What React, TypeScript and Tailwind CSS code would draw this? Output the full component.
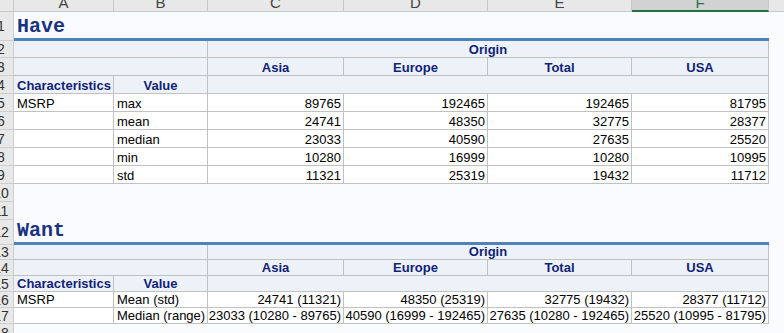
import type { ReactNode } from "react";

const COLS = [
  { l: "A", w: "w-[100px]" },
  { l: "B", w: "w-[94px]" },
  { l: "C", w: "w-[136px]" },
  { l: "D", w: "w-[144px]" },
  { l: "E", w: "w-[144px]" },
  { l: "F", w: "w-[137px]" },
];

const HAVE = [
  ["MSRP", "max", "89765", "192465", "192465", "81795"],
  ["", "mean", "24741", "48350", "32775", "28377"],
  ["", "median", "23033", "40590", "27635", "25520"],
  ["", "min", "10280", "16999", "10280", "10995"],
  ["", "std", "11321", "25319", "19432", "11712"],
];

const WANT = [
  ["MSRP", "Mean (std)", "24741 (11321)", "48350 (25319)", "32775 (19432)", "28377 (11712)"],
  [
    "",
    "Median (range)",
    "23033 (10280 - 89765)",
    "40590 (16999 - 192465)",
    "27635 (10280 - 192465)",
    "25520 (10995 - 81795)",
  ],
];

const cellBase =
  "shrink-0 flex items-end overflow-hidden whitespace-nowrap border-r border-b border-[#c1c1c1]";

function Cell({
  w,
  head,
  align = "l",
  children,
}: {
  w: string;
  head?: boolean;
  align?: "l" | "c" | "r";
  children?: ReactNode;
}) {
  const pos =
    align === "r" ? "justify-end pr-[2px]" : align === "c" ? "justify-center" : "justify-start pl-[3px]";
  const look = head ? "bg-[#edf2f9] text-[#112277] font-bold" : "bg-white text-black";
  return <div className={`${cellBase} ${w} ${pos} ${look}`}>{children}</div>;
}

function Row({ n, h, children }: { n: number; h: string; children?: ReactNode }) {
  return (
    <div className={`flex ${h}`}>
      {/* row header, left half scrolled out of view */}
      <div className="w-[14px] shrink-0 overflow-hidden flex items-center bg-[#e8e8e8] border-r border-b border-[#cdcdcd] text-[14px] text-[#333]">
        <div className="w-[28px] -ml-[13px] shrink-0 text-center leading-none">{n}</div>
      </div>
      {children}
      <div className="flex-1 bg-[#fafbfe]" />
    </div>
  );
}

function Title({ n, h, text }: { n: number; h: string; text: string }) {
  return (
    <Row n={n} h={h}>
      <div className="w-[755px] shrink-0 flex items-end pl-[3px] border-b-[3px] border-[#4f81bd] bg-[#fafbfe]">
        <span className="font-['Liberation_Mono','Courier_New',monospace] font-bold text-[20px] leading-[22px] text-[#1a3380]">
          {text}
        </span>
      </div>
    </Row>
  );
}

function Table({
  start,
  rows,
  first,
  rowH,
}: {
  start: number;
  rows: string[][];
  first: string;
  rowH: string;
}) {
  return (
    <>
      <Row n={start} h={first}>
        <Cell w="w-[194px]" head />
        <Cell w="w-[561px]" head align="c">
          Origin
        </Cell>
      </Row>
      <Row n={start + 1} h={rowH}>
        <Cell w="w-[194px]" head />
        {["Asia", "Europe", "Total", "USA"].map((o, i) => (
          <Cell key={o} w={COLS[i + 2].w} head align="c">
            {o}
          </Cell>
        ))}
      </Row>
      <Row n={start + 2} h={rowH}>
        <Cell w={COLS[0].w} head>
          Characteristics
        </Cell>
        <Cell w={COLS[1].w} head align="c">
          Value
        </Cell>
        <Cell w="w-[561px]" head />
      </Row>
      {rows.map((r, ri) => (
        <Row key={ri} n={start + 3 + ri} h={rowH}>
          {r.map((v, ci) => (
            <Cell key={ci} w={COLS[ci].w} align={ci > 1 ? "r" : "l"}>
              {v}
            </Cell>
          ))}
        </Row>
      ))}
    </>
  );
}

export default function App() {
  return (
    <div className="w-[784px] h-[333px] overflow-hidden bg-[#fafbfe] font-['Liberation_Sans',Arial,sans-serif] text-[13px] leading-[15px]">
      {/* column letters */}
      <div className="flex h-[12px] bg-[#e8e8e8] text-[15px] text-[#444] leading-none">
        <div className="w-[14px] shrink-0 border-r border-b border-[#c8c8c8]" />
        {COLS.map((c) =>
          c.l === "F" ? (
            <div
              key={c.l}
              className={`${c.w} shrink-0 flex items-end justify-center overflow-hidden bg-[#d2d2d2] text-[#217346] border-r border-[#c8c8c8] border-b-2 border-b-[#217346]`}
            >
              {c.l}
            </div>
          ) : (
            <div
              key={c.l}
              className={`${c.w} shrink-0 flex items-end justify-center overflow-hidden pb-[1px] border-r border-b border-[#c8c8c8]`}
            >
              {c.l}
            </div>
          )
        )}
        <div className="flex-1 border-b border-[#c8c8c8]" />
      </div>

      <Title n={1} h="h-[29px]" text="Have" />
      <Table start={2} rows={HAVE} first="h-[17px]" rowH="h-[18px]" />
      <Row n={10} h="h-[18px]" />
      <Row n={11} h="h-[18px]" />

      <Title n={12} h="h-[25px]" text="Want" />
      <Table start={13} rows={WANT} first="h-[15px]" rowH="h-[16px]" />
      <Row n={18} h="h-[18px]" />
    </div>
  );
}
